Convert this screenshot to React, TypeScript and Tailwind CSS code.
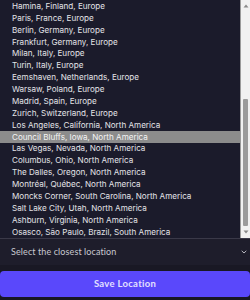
const locations = [
  "Hamina, Finland, Europe",
  "Paris, France, Europe",
  "Berlin, Germany, Europe",
  "Frankfurt, Germany, Europe",
  "Milan, Italy, Europe",
  "Turin, Italy, Europe",
  "Eemshaven, Netherlands, Europe",
  "Warsaw, Poland, Europe",
  "Madrid, Spain, Europe",
  "Zurich, Switzerland, Europe",
  "Los Angeles, California, North America",
  "Council Bluffs, Iowa, North America",
  "Las Vegas, Nevada, North America",
  "Columbus, Ohio, North America",
  "The Dalles, Oregon, North America",
  "Montréal, Québec, North America",
  "Moncks Corner, South Carolina, North America",
  "Salt Lake City, Utah, North America",
  "Ashburn, Virginia, North America",
  "Osasco, São Paulo, Brazil, South America",
];

export default function App() {
  return (
    <div className="w-[250px] h-[300px] bg-[#181724] flex flex-col overflow-hidden font-['Lato',sans-serif]">
      {/* open dropdown list */}
      <div className="h-[239px] flex bg-[#1b1b2b] border-b border-[#3a3948]">
        <div className="flex-1 flex flex-col font-['Inter',sans-serif]">
          {locations.map((l) => (
            <div
              key={l}
              className={
                "h-[11.88px] flex items-center pl-[12px] text-[8.1px] leading-none whitespace-nowrap " +
                (l.startsWith("Council") ? "bg-[#8c8c8c] text-[#f4f4f4]" : "text-[#e4e4e8]")
              }
            >
              {l}
            </div>
          ))}
        </div>
        {/* scrollbar */}
        <div className="w-[10px] bg-[#f1f1f1] border-l border-[#9a9a9a] flex flex-col items-center">
          <svg width="6" height="6" viewBox="0 0 6 6" className="mt-[3px]">
            <path d="M0.5 4.5 L3 1.5 L5.5 4.5 Z" fill="#8a8a8a" />
          </svg>
          <div className="flex-1 w-full flex flex-col justify-end">
            <div className="mx-auto w-[5px] h-[127px] bg-[#9b9b9b] rounded-[1px] mb-[3px]" />
          </div>
          <svg width="6" height="6" viewBox="0 0 6 6" className="mb-[3px]">
            <path d="M0.5 1.5 L3 4.5 L5.5 1.5 Z" fill="#8a8a8a" />
          </svg>
        </div>
      </div>

      {/* select */}
      <div className="h-[26px] bg-[#1e1d2b] flex items-center justify-between pl-[11px] pr-[3px]">
        <span className="text-[9px] text-[#c9c8d0] tracking-[0.1px]">Select the closest location</span>
        <svg width="6" height="4" viewBox="0 0 6 4">
          <path d="M0.7 0.8 L3 3 L5.3 0.8" fill="none" stroke="#b8b8c0" strokeWidth="1" />
        </svg>
      </div>
      <div className="h-[6px] bg-[#191824]" />

      {/* button */}
      <button className="h-[26px] mx-0 rounded-[4px] bg-[#5a48fb] text-[#e3e0ff] text-[9.5px] font-bold tracking-[0.3px] flex items-center justify-center">
        Save Location
      </button>
    </div>
  );
}
